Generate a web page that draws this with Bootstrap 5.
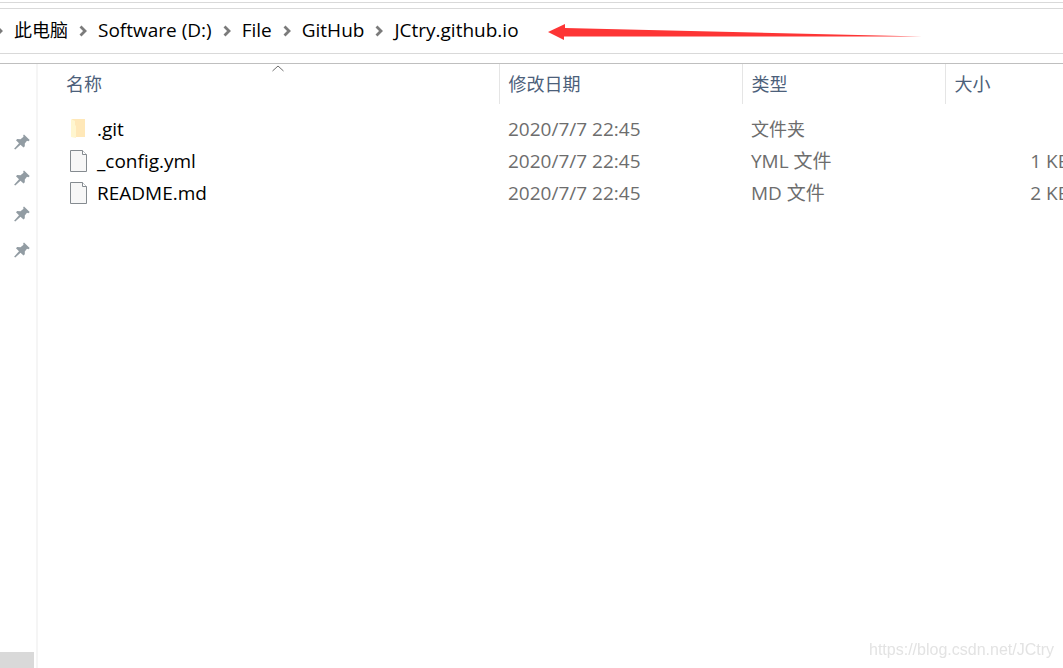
<!DOCTYPE html>
<html lang="zh-CN">
<head>
<meta charset="utf-8">
<meta name="viewport" content="width=device-width, initial-scale=1">
<title>JCtry.github.io</title>
<link href="https://cdn.jsdelivr.net/npm/bootstrap@5.3.0/dist/css/bootstrap.min.css" rel="stylesheet">
<style>
  body { font-family: "Open Sans", "Noto Sans CJK SC", sans-serif; font-size: 19px; line-height: 24px; color: #000; background: #fff; }
  .han { font-size: 18px; }
  .address-strip { border-top: 1px solid #d9d9d9; margin-top: 2px; padding-top: 5px; }
  .address-bar { height: 46px; border-top: 1px solid #d9d9d9; border-bottom: 1px solid #d9d9d9; }
  .path-list { gap: 11px; margin-left: -5px; }
  .path-list li { gap: 11px; }
  .path-list a { color: #000; margin-bottom: 2px; }
  .pointer { margin: 2px 0 0 29px; }
  .explorer { border-top: 1px solid #bfbfbf; margin-top: 9px; }
  .pins { width: 38px; border-right: 2px solid #f5f5f5; padding-top: 60px; }
  .pins li { height: 36px; padding-left: 14px; }
  .scroll-thumb { width: 34px; height: 16px; background: #d9d9d9; }
  .files { table-layout: fixed; width: 1041px; white-space: nowrap; }
  .files th { height: 40px; padding: 0 9px; font-size: 18px; font-weight: 400; color: #4c607a; border-right: 1px solid #e5e5e5; vertical-align: middle; }
  .files th:last-child { border-right: 0; }
  .files td { height: 32px; padding: 0 9px; color: #6d6d6d; vertical-align: middle; }
  .files th:first-child { padding-left: 28px; }
  .files td:first-child { padding-left: 32px; color: #000; }
  .files tbody::before { content: ""; display: block; height: 9px; }
  .file-name { gap: 9px; }
  .sort-mark { top: 1px; left: 234px; }
  .watermark { right: 9px; bottom: 6px; font: 16px/24px "Liberation Sans", sans-serif; color: #e3e3e3; }
</style>
</head>
<body class="vh-100 d-flex flex-column overflow-hidden">
<svg class="d-none">
  <symbol id="chevron" viewBox="0 0 8 12"><path d="M1.500 1.500 6 6 1.500 10.500" fill="none" stroke="#7b7b7b" stroke-width="2.800"/></symbol>
  <symbol id="pin" viewBox="0 0 16 16"><path d="M10 .5 15.700 6 14.500 7.200 13 6.800 10.800 9.500 10.800 12.200 9.500 13.500 6.500 10.700 1.300 15.600.1 14.700 5 9.300 2 6.300 3.200 5 6.500 5.200 9.500 2.800 9.200 1.300z" fill="#929ca3"/></symbol>
  <symbol id="page" viewBox="0 0 18 22"><path d="M.5.5h12l4 4v17H.5z" fill="#f7f7f7" stroke="#858b90"/><path d="M12.500.5v4h4" fill="#fff" stroke="#858b90"/></symbol>
</svg>

<header class="address-strip">
  <div class="address-bar d-flex align-items-center">
    <nav aria-label="路径">
      <ol class="path-list list-unstyled d-flex mb-0">
        <li class="d-flex align-items-center"><svg width="8" height="12"><use href="#chevron"/></svg><a class="han text-decoration-none" href="#">此电脑</a></li>
        <li class="d-flex align-items-center"><svg width="8" height="12"><use href="#chevron"/></svg><a class="text-decoration-none" href="#">Software (D:)</a></li>
        <li class="d-flex align-items-center"><svg width="8" height="12"><use href="#chevron"/></svg><a class="text-decoration-none" href="#">File</a></li>
        <li class="d-flex align-items-center"><svg width="8" height="12"><use href="#chevron"/></svg><a class="text-decoration-none" href="#">GitHub</a></li>
        <li class="d-flex align-items-center"><svg width="8" height="12"><use href="#chevron"/></svg><a class="text-decoration-none" href="#">JCtry.github.io</a></li>
      </ol>
    </nav>
    <svg class="pointer" width="376" height="18" viewBox="0 0 376 18"><path d="M0 9 17 1v4L374 13.500H16V17z" fill="#fd3535"/></svg>
  </div>
</header>

<main class="explorer d-flex flex-grow-1 overflow-hidden">
  <aside class="d-flex flex-column flex-shrink-0">
    <div class="pins flex-grow-1 d-flex flex-column justify-content-between">
      <ul class="list-unstyled mb-0">
        <li class="d-flex align-items-center"><svg width="16" height="16"><use href="#pin"/></svg></li>
        <li class="d-flex align-items-center"><svg width="16" height="16"><use href="#pin"/></svg></li>
        <li class="d-flex align-items-center"><svg width="16" height="16"><use href="#pin"/></svg></li>
        <li class="d-flex align-items-center"><svg width="16" height="16"><use href="#pin"/></svg></li>
      </ul>
      <div class="scroll-thumb"></div>
    </div>
  </aside>
  <section class="flex-grow-1 overflow-hidden">
    <table class="files">
      <colgroup><col style="width:461px"><col style="width:243px"><col style="width:203px"><col></colgroup>
      <thead>
        <tr>
          <th class="position-relative" scope="col">名称<svg class="sort-mark position-absolute" width="12" height="7"><path d="M.5 6 6 1l5.500 5" fill="none" stroke="#6d6d6d"/></svg></th>
          <th scope="col">修改日期</th><th scope="col">类型</th><th scope="col">大小</th>
        </tr>
      </thead>
      <tbody>
        <tr>
          <td><div class="file-name d-flex align-items-center"><svg width="18" height="22"><path d="M2 1h13v18H2z" fill="#ffe8b8"/><path d="M1 1l4 2v4l1 1v12l-5-1z" fill="#fff6cf"/></svg>.git</div></td>
          <td>2020/7/7 22:45</td><td class="han">文件夹</td><td></td>
        </tr>
        <tr>
          <td><div class="file-name d-flex align-items-center"><svg width="18" height="22"><use href="#page"/></svg>_config.yml</div></td>
          <td>2020/7/7 22:45</td><td>YML 文件</td><td class="text-end">1 KB</td>
        </tr>
        <tr>
          <td><div class="file-name d-flex align-items-center"><svg width="18" height="22"><use href="#page"/></svg>README.md</div></td>
          <td>2020/7/7 22:45</td><td>MD 文件</td><td class="text-end">2 KB</td>
        </tr>
      </tbody>
    </table>
  </section>
</main>
<div class="watermark position-fixed">https://blog.csdn.net/JCtry</div>
<script src="https://cdn.jsdelivr.net/npm/bootstrap@5.3.0/dist/js/bootstrap.bundle.min.js"></script>
</body>
</html>
